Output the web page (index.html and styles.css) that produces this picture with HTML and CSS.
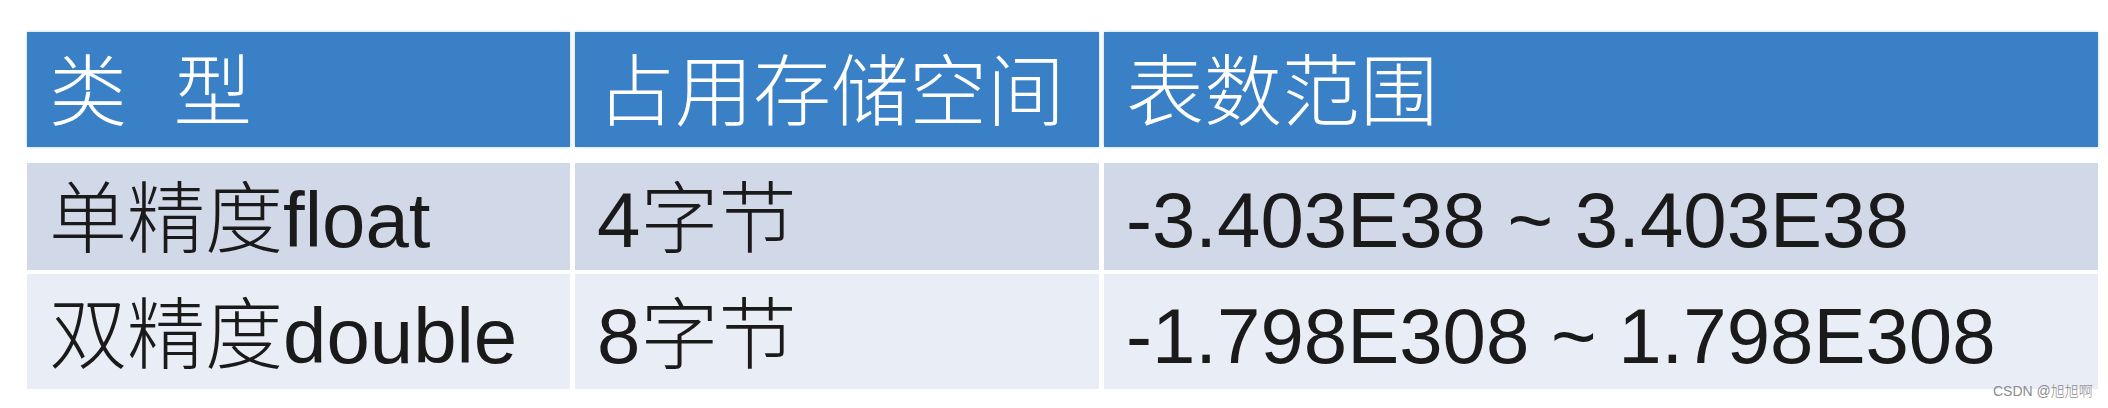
FILE: index.html
```html
<!DOCTYPE html>
<html lang="zh-CN">
<head>
<meta charset="utf-8">
<title>float / double</title>
<link rel="stylesheet" href="styles.css">
</head>
<body>
<div class="page">
  <div class="table">
    <div class="row row-head">
      <div class="cell"><span class="spaced">类 型</span></div>
      <div class="cell">占用存储空间</div>
      <div class="cell">表数范围</div>
    </div>
    <div class="row row-odd">
      <div class="cell">单精度float</div>
      <div class="cell">4字节</div>
      <div class="cell">-3.403E38 ~ 3.403E38</div>
    </div>
    <div class="row row-even">
      <div class="cell">双精度double</div>
      <div class="cell">8字节</div>
      <div class="cell">-1.798E308 ~ 1.798E308</div>
    </div>
  </div>
  <div class="watermark">CSDN @旭旭啊</div>
</div>
</body>
</html>
```

FILE: styles.css
```css
html, body {
  margin: 0;
  padding: 0;
  background: #ffffff;
}

.page {
  position: relative;
  width: 2108px;
  height: 408px;
  box-sizing: border-box;
  padding: 32px 0 0 27px;
  font-family: "Liberation Sans", "Noto Sans CJK SC", sans-serif;
  font-size: 78px;
  font-weight: 300;
  color: #1a1a1a;
}

.table {
  width: 2071px;
  display: flex;
  flex-direction: column;
}

.row {
  display: grid;
  grid-template-columns: 543px 524px 994px;
  column-gap: 5px;
}

.cell {
  box-sizing: border-box;
  padding: 7px 0 0 22px;
  white-space: nowrap;
  overflow: visible;
}

.row-head {
  height: 115px;
  margin-bottom: 16px;
}

.row-head .cell {
  background: #3a80c6;
  color: #ffffff;
  line-height: 108px;
  box-shadow: 0 0 3px rgba(58, 128, 198, 0.35);
}

.spaced {
  word-spacing: 25px;
}

.row-odd {
  height: 107px;
  margin-bottom: 4px;
}

.row-odd .cell {
  background: #d1d8e8;
  line-height: 100px;
}

.row-even {
  height: 115px;
}

.row-even .cell {
  background: #e9edf5;
  line-height: 106px;
  padding-top: 9px;
}

.watermark {
  position: absolute;
  left: 1993px;
  top: 383px;
  font-size: 14px;
  line-height: 16px;
  color: #8c8c8c;
}
```
